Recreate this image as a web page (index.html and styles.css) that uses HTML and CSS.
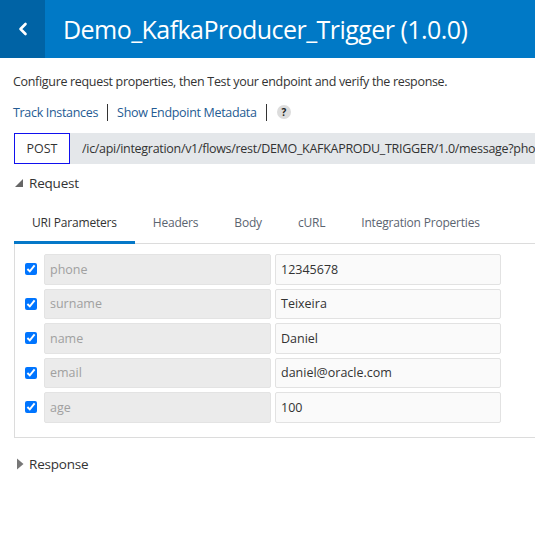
FILE: index.html
```html
<!DOCTYPE html>
<html>
<head>
<meta charset="utf-8">
<link rel="stylesheet" href="styles.css">
</head>
<body>
<header class="topbar">
  <div class="back">
    <svg width="12" height="14" viewBox="0 0 12 14"><path d="M8.5 2 L3.5 7 L8.5 12" fill="none" stroke="#fff" stroke-width="2.6" stroke-linecap="round" stroke-linejoin="round"/></svg>
  </div>
  <h1 class="title">Demo_KafkaProducer_Trigger (1.0.0)</h1>
</header>
<main class="content">
  <p class="intro">Configure request properties, then Test your endpoint and verify the response.</p>
  <div class="links">
    <a class="link">Track Instances</a>
    <span class="sep"></span>
    <a class="link">Show Endpoint Metadata</a>
    <span class="sep"></span>
    <span class="help">?</span>
  </div>
  <div class="endpoint">
    <div class="method">POST</div>
    <div class="url"><span class="url-text">/ic/api/integration/v1/flows/rest/DEMO_KAFKAPRODU_TRIGGER/1.0/message?phone=12345678&amp;surname=Teixeira</span></div>
  </div>
  <div class="section-toggle">
    <svg class="tri" width="10" height="10" viewBox="0 0 10 10"><path d="M9 1 L9 9 L1 9 Z" fill="#666"/></svg>
    <span>Request</span>
  </div>
  <nav class="tabs">
    <span class="tab active">URI Parameters</span>
    <span class="tab">Headers</span>
    <span class="tab">Body</span>
    <span class="tab">cURL</span>
    <span class="tab">Integration Properties</span>
  </nav>
  <div class="panel">
    <div class="row"><input type="checkbox" checked class="cb"><div class="key">phone</div><div class="val">12345678</div></div>
    <div class="row"><input type="checkbox" checked class="cb"><div class="key">surname</div><div class="val">Teixeira</div></div>
    <div class="row"><input type="checkbox" checked class="cb"><div class="key">name</div><div class="val">Daniel</div></div>
    <div class="row"><input type="checkbox" checked class="cb"><div class="key">email</div><div class="val">daniel@oracle.com</div></div>
    <div class="row"><input type="checkbox" checked class="cb"><div class="key">age</div><div class="val">100</div></div>
  </div>
  <div class="section-toggle response">
    <svg class="tri" width="10" height="12" viewBox="0 0 10 12"><path d="M3 0.5 L9.5 6 L3 11.5 Z" fill="#777"/></svg>
    <span>Response</span>
  </div>
</main>
</body>
</html>
```
FILE: styles.css
```css
html, body {
  margin: 0;
  padding: 0;
  background: #fff;
  overflow: hidden;
}
body {
  font-family: "Open Sans", "Noto Sans", sans-serif;
  color: #333;
  width: 535px;
}
.topbar {
  display: flex;
  align-items: center;
  height: 58px;
  background: #0079c6;
}
.back {
  width: 45px;
  height: 58px;
  background: #0063a5;
  display: flex;
  align-items: center;
  justify-content: center;
}
.title {
  margin: 0 0 0 18px;
  font-size: 25px;
  font-weight: 400;
  color: #fff;
  white-space: nowrap;
  letter-spacing: -0.55px;
}
.content {
  padding-left: 14px;
}
.intro {
  margin: 0;
  padding-top: 15px;
  font-size: 12.5px;
  line-height: 18px;
  letter-spacing: -0.32px;
  margin-left: -1px;
}
.links {
  display: flex;
  align-items: center;
  height: 18px;
  margin-top: 12px;
  font-size: 12.5px;
  letter-spacing: -0.32px;
  margin-left: -1px;
}
.link {
  color: #255b93;
}
.sep {
  width: 1px;
  height: 17px;
  background: #333;
  margin: 0 9px;
}
.help {
  width: 14px;
  height: 14px;
  border-radius: 50%;
  background: #dcdcdc;
  font-size: 10px;
  font-weight: 700;
  line-height: 14px;
  text-align: center;
  color: #222;
  margin-left: 1px;
}
.endpoint {
  display: flex;
  margin-top: 12px;
  height: 31px;
}
.method {
  width: 54px;
  border: 1px solid #1111ee;
  display: flex;
  align-items: center;
  justify-content: center;
  font-size: 12.5px;
  color: #333;
}
.url {
  flex: 1;
  min-width: 0;
  background: #e4e7ea;
  display: flex;
  align-items: center;
  padding-left: 12px;
  font-size: 12.5px;
  white-space: nowrap;
  overflow: hidden;
  letter-spacing: -0.3px;
}
.url-text {
  overflow: hidden;
}
.section-toggle {
  display: flex;
  align-items: center;
  margin-top: 10px;
  height: 18px;
  font-size: 13.5px;
  letter-spacing: -0.2px;
}
.section-toggle .tri {
  margin-right: 5px;
}
.tabs {
  display: flex;
  margin-top: 18px;
  border-bottom: 1px solid #dcdcdc;
  margin-right: -10px;
}
.tab {
  padding: 0 18px;
  line-height: 25px;
  font-size: 12px;
  color: #5b6470;
  letter-spacing: -0.2px;
  border-bottom: 3px solid transparent;
  margin-bottom: -1px;
  box-sizing: border-box;
  height: 34px;
}
.tab.active {
  color: #333;
  border-bottom-color: #0578c8;
}
.panel {
  border-left: 1px solid #dcdcdc;
  border-bottom: 1px solid #dcdcdc;
  padding: 10px 0 14px 0;
  margin-right: -10px;
  display: flex;
  flex-direction: column;
  gap: 4px;
}
.row {
  display: flex;
  align-items: center;
  height: 30.5px;
}
.cb {
  margin: 0 7px 0 10px;
  width: 12px;
  height: 12px;
}
.key, .val {
  box-sizing: border-box;
  height: 30.5px;
  display: flex;
  align-items: center;
  padding-left: 5px;
  font-size: 12.5px;
  border-radius: 2px;
}
.key {
  width: 227px;
  background: #ebebeb;
  border: 1px solid #e3e3e3;
  color: #a0a0a0;
}
.val {
  width: 226px;
  margin-left: 4px;
  background: #fafafa;
  border: 1px solid #e2e2e2;
  color: #333;
}
.response {
  margin-top: 17px;
  padding-left: 0;
}
.response .tri {
  margin-right: 5px;
}
```
